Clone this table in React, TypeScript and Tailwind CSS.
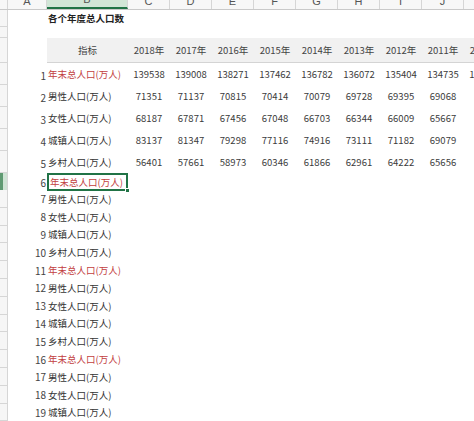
const GRID = "grid grid-cols-[8px_39px_81px_repeat(9,42px)]";
const FONT = "font-['Noto_Sans_CJK_SC','Noto_Sans',sans-serif]";

const LETTERS = ["A", "B", "C", "D", "E", "F", "G", "H", "I", "J", "K"];
const YEARS = [2018, 2017, 2016, 2015, 2014, 2013, 2012, 2011, 2010];

const LABELS = [
  "年末总人口(万人)",
  "男性人口(万人)",
  "女性人口(万人)",
  "城镇人口(万人)",
  "乡村人口(万人)",
];

// last column is cut off at the window edge, only the first row peeks in
const DATA: (number | null)[][] = [
  [139538, 139008, 138271, 137462, 136782, 136072, 135404, 134735, 134091],
  [71351, 71137, 70815, 70414, 70079, 69728, 69395, 69068, null],
  [68187, 67871, 67456, 67048, 66703, 66344, 66009, 65667, null],
  [83137, 81347, 79298, 77116, 74916, 73111, 71182, 69079, null],
  [56401, 57661, 58973, 60346, 61866, 62961, 64222, 65656, null],
];

function RowHead({ active }: { active?: boolean }) {
  return (
    <div
      className={`border-r border-b border-[#d6d6d6] ${
        active ? "bg-[#cfe3d4] border-l-[3px] border-l-[#5f9a72]" : "bg-[#f6f6f6]"
      }`}
    />
  );
}

export default function App() {
  const rest = Array.from({ length: 14 }, (_, i) => i + 6);
  return (
    <div className={`w-[474px] h-[421px] overflow-hidden bg-white text-[#3b3b3b] ${FONT}`}>
      {/* column letters */}
      <div className={`${GRID} h-[10px] bg-[#f7f7f7] border-b border-[#c9c9c9]`}>
        <div className="border-r border-[#d6d6d6]" />
        {LETTERS.map((l) => (
          <div
            key={l}
            className={`flex items-end justify-center overflow-hidden border-r border-[#d6d6d6] pb-[2px] text-[11px] leading-none font-['Liberation_Sans',sans-serif] text-[#555] ${
              l === "B" ? "bg-[#d2e6d7] border-b-2 border-b-[#217346] text-[#1d5e3a]" : ""
            }`}
          >
            {l}
          </div>
        ))}
      </div>

      {/* title */}
      <div className={`${GRID} h-[17px]`}>
        <RowHead />
        <div />
        <div className="col-span-4 flex items-center pl-[1px] text-[9.5px] font-bold text-[#222] whitespace-nowrap">
          各个年度总人口数
        </div>
      </div>
      <div className={`${GRID} h-[11px]`}>
        <RowHead />
      </div>

      {/* header band */}
      <div className={`${GRID} h-[25px]`}>
        <RowHead />
        <div />
        <div className="flex items-center justify-center bg-[#f1f1f1] border-b border-[#d4d4d4] text-[9.5px] text-[#444]">
          指标
        </div>
        {YEARS.map((y) => (
          <div
            key={y}
            className="flex items-center justify-center bg-[#f1f1f1] border-b border-[#d4d4d4] text-[9.5px] text-[#444] whitespace-nowrap"
          >
            {y}年
          </div>
        ))}
      </div>

      {/* rows 1-5 */}
      {DATA.map((vals, i) => (
        <div key={i} className={`${GRID} h-[22px]`}>
          <RowHead />
          <div className="flex items-end justify-end pb-[2px] pr-[1px] text-[10px] text-[#444]">
            {i + 1}
          </div>
          <div
            className={`flex items-center pl-[1px] text-[9.5px] whitespace-nowrap ${
              i === 0 ? "text-[#c2403e]" : "text-[#333]"
            }`}
          >
            {LABELS[i]}
          </div>
          {vals.map((v, j) => (
            <div key={j} className="flex items-center justify-center text-[9.5px] text-[#3b3b3b]">
              {v}
            </div>
          ))}
        </div>
      ))}

      {/* rows 6-19 */}
      {rest.map((n) => {
        const k = (n - 1) % 5;
        return (
          <div key={n} className={`${GRID} ${n === 6 ? "h-[17px]" : "h-[17.8px]"}`}>
            <RowHead active={n === 6} />
            <div className="flex items-center justify-end pr-[1px] text-[10px] text-[#444]">{n}</div>
            <div
              className={`relative flex items-center pl-[1px] text-[9.5px] whitespace-nowrap ${
                k === 0 ? "text-[#c2403e]" : "text-[#333]"
              } ${n === 6 ? "border-2 border-[#217346] pl-0" : ""}`}
            >
              {LABELS[k]}
              {n === 6 && (
                <span className="absolute -right-[4px] -bottom-[4px] h-[5px] w-[5px] bg-[#217346] border border-white" />
              )}
            </div>
          </div>
        );
      })}
    </div>
  );
}
